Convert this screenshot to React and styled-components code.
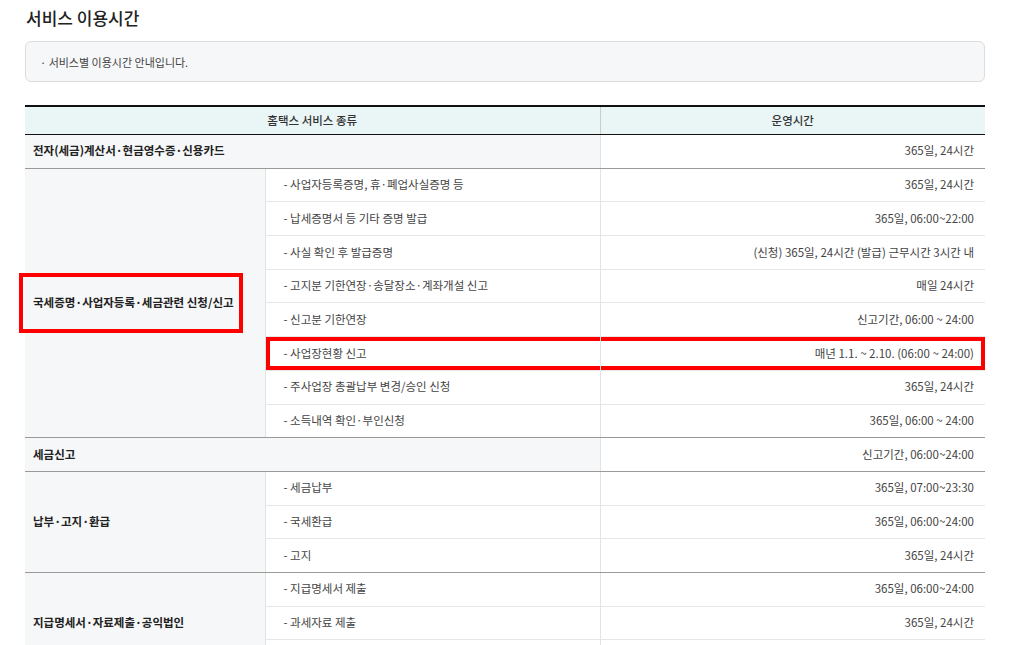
import React from "react";
import styled, { createGlobalStyle } from "styled-components";

const Global = createGlobalStyle`
  body { margin: 0; background: #fff; font-family: "Noto Sans CJK KR", "Noto Sans", sans-serif; color: #333; }
`;
const Page = styled.div` padding: 6px 36px 0 25px; `;
const Title = styled.h2` margin: 0 0 11px; font-size: 17px; font-weight: 500; color: #222; line-height: 24px; padding-left: 1px; `;
const Info = styled.div`
  border: 1px solid #ddd; border-radius: 6px; background: #f6f7f8; height: 39px;
  display: flex; align-items: center; padding-left: 14px; font-size: 11px; color: #444;
`;
const Table = styled.table`
  margin-top: 23px; width: 960px; border-collapse: collapse; table-layout: fixed;
  border-top: 2px solid #111; font-size: 11.5px; line-height: 1.2;
`;
const Th = styled.th`
  background: #eaf5f5; height: 27px; font-weight: 500; color: #333; padding: 0;
  border-bottom: 1px solid #111; border-left: ${p => p.$left ? "1px solid #ccc" : "none"};
`;
const Cat = styled.td`
  background: #f5f7f8; font-weight: 700; color: #222; padding: 0 8px; height: 30.7px;
  border-bottom: 1px solid #999; vertical-align: middle;
`;
const Sub = styled.td`
  padding: 0 0 0 18px; height: 30.7px; color: #444;
  border-left: 1px solid #e3e3e3;
  border-bottom: 1px solid ${p => p.$end ? "#999" : "#e6e6e6"};
  box-shadow: ${p => p.$hl ? "inset 4px 4px 0 #f00, inset 0 -4px 0 #f00" : "none"};
`;
const Time = styled.td`
  text-align: right; padding-right: 11px; height: 30.7px; color: #444;
  border-left: 1px solid #e3e3e3;
  border-bottom: 1px solid ${p => p.$end ? "#999" : "#e6e6e6"};
  box-shadow: ${p => p.$hl ? "inset -4px 4px 0 #f00, inset 0 -4px 0 #f00" : "none"};
`;
const Boxed = styled.span`
  display: flex; align-items: center; margin-left: -14px;
  border: 4px solid #f00; padding-left: 10px; box-sizing: border-box; width: 224px; height: 60px;
`;

const groups = [
  { cat: "국세증명·사업자등록·세금관련 신청/신고", boxed: true, rows: [
    ["- 사업자등록증명, 휴·폐업사실증명 등", "365일, 24시간"],
    ["- 납세증명서 등 기타 증명 발급", "365일, 06:00~22:00"],
    ["- 사실 확인 후 발급증명", "(신청) 365일, 24시간 (발급) 근무시간 3시간 내"],
    ["- 고지분 기한연장·송달장소·계좌개설 신고", "매일 24시간"],
    ["- 신고분 기한연장", "신고기간, 06:00 ~ 24:00"],
    ["- 사업장현황 신고", "매년 1.1. ~ 2.10. (06:00 ~ 24:00)", true],
    ["- 주사업장 총괄납부 변경/승인 신청", "365일, 24시간"],
    ["- 소득내역 확인·부인신청", "365일, 06:00 ~ 24:00"],
  ]},
  { cat: "세금신고", single: "신고기간, 06:00~24:00" },
  { cat: "납부·고지·환급", rows: [
    ["- 세금납부", "365일, 07:00~23:30"],
    ["- 국세환급", "365일, 06:00~24:00"],
    ["- 고지", "365일, 24시간"],
  ]},
  { cat: "지급명세서·자료제출·공익법인", rows: [
    ["- 지급명세서 제출", "365일, 06:00~24:00"],
    ["- 과세자료 제출", "365일, 24시간"],
    ["- 공익법인 보고서 제출/공시", "365일, 06:00~24:00"],
  ]},
];

export default function App() {
  return (
    <Page>
      <Global />
      <Title>서비스 이용시간</Title>
      <Info>· 서비스별 이용시간 안내입니다.</Info>
      <Table>
        <colgroup><col style={{ width: 240 }} /><col style={{ width: 335 }} /><col /></colgroup>
        <thead><tr><Th colSpan={2}>홈택스 서비스 종류</Th><Th $left>운영시간</Th></tr></thead>
        <tbody>
          <tr><Cat colSpan={2}>전자(세금)계산서·현금영수증·신용카드</Cat><Time $end>365일, 24시간</Time></tr>
          {groups.map((g, gi) => g.single ? (
            <tr key={gi}><Cat colSpan={2}>{g.cat}</Cat><Time $end>{g.single}</Time></tr>
          ) : g.rows.map((r, i) => {
            const end = i === g.rows.length - 1;
            return (
              <tr key={gi + "-" + i}>
                {i === 0 && <Cat rowSpan={g.rows.length}>{g.boxed ? <Boxed>{g.cat}</Boxed> : g.cat}</Cat>}
                <Sub $end={end} $hl={r[2]}>{r[0]}</Sub>
                <Time $end={end} $hl={r[2]}>{r[1]}</Time>
              </tr>
            );
          }))}
        </tbody>
      </Table>
    </Page>
  );
}
